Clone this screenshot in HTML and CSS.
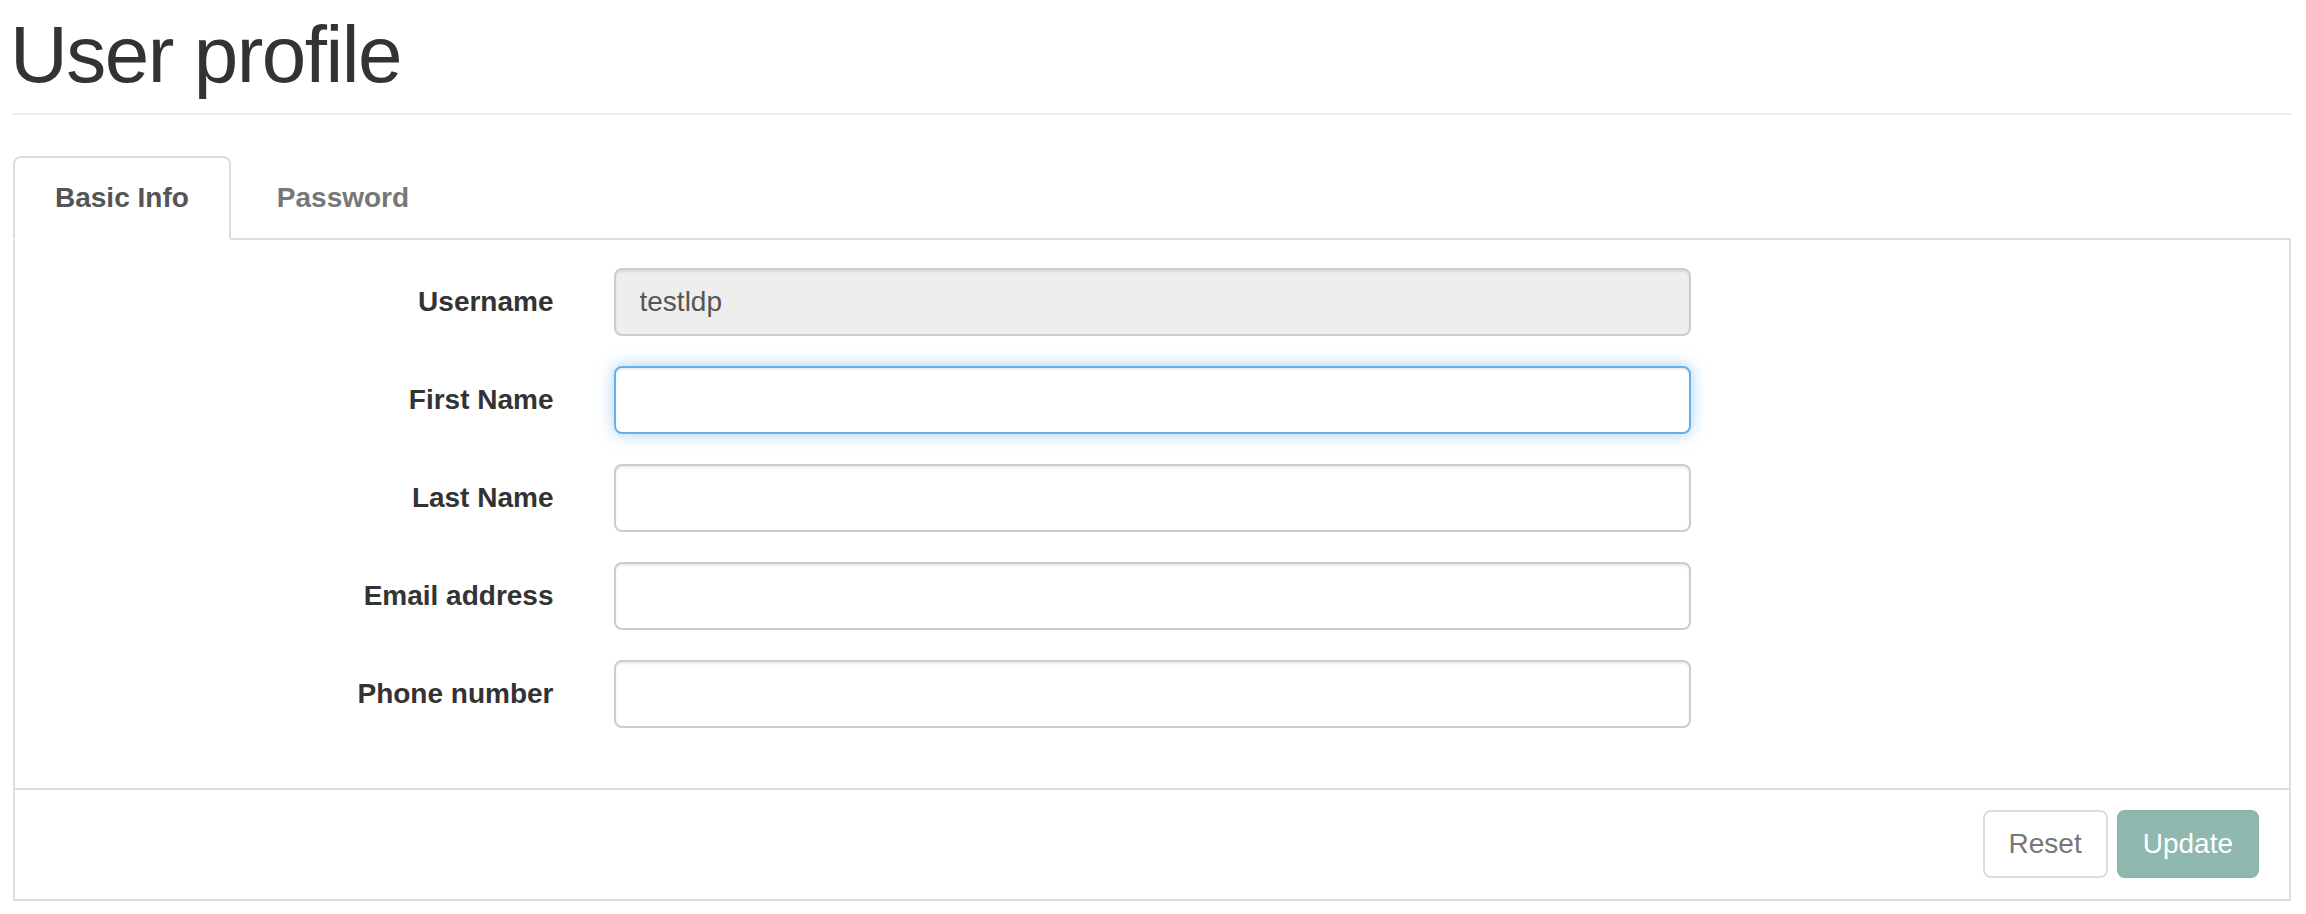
FILE: index.html
```html
<!DOCTYPE html>
<html lang="en">
<head>
    <meta charset="UTF-8">
    <meta name="viewport" content="width=device-width, initial-scale=1.0">
    <title>User profile</title>
    <link rel="stylesheet" href="styles.css">
</head>
<body>

    <div class="page">
        <h1 class="page-title">User profile</h1>

        <ul class="tabs">
            <li class="tab active">Basic Info</li>
            <li class="tab">Password</li>
        </ul>

        <form class="panel" id="perfil">
            <div class="panel-body">
                <div class="form-row">
                    <label class="form-label" for="username">Username</label>
                    <div class="form-field">
                        <input type="text" id="username" class="form-control" value="testldp" disabled>
                    </div>
                </div>

                <div class="form-row">
                    <label class="form-label" for="first-name">First Name</label>
                    <div class="form-field">
                        <input type="text" id="first-name" class="form-control is-focused">
                    </div>
                </div>

                <div class="form-row">
                    <label class="form-label" for="last-name">Last Name</label>
                    <div class="form-field">
                        <input type="text" id="last-name" class="form-control">
                    </div>
                </div>

                <div class="form-row">
                    <label class="form-label" for="email">Email address</label>
                    <div class="form-field">
                        <input type="email" id="email" class="form-control">
                    </div>
                </div>

                <div class="form-row">
                    <label class="form-label" for="phone">Phone number</label>
                    <div class="form-field">
                        <input type="text" id="phone" class="form-control">
                    </div>
                </div>
            </div>

            <div class="panel-footer">
                <button type="reset" class="btn btn-reset">Reset</button>
                <button type="submit" class="btn btn-update" disabled>Update</button>
            </div>
        </form>
    </div>

</body>
</html>
```

FILE: styles.css
```css
body {
    font-family: "Liberation Sans", Arial, Helvetica, sans-serif;
    font-size: 28px;
    line-height: 40px;
    margin: 0;
    padding: 0;
    background-color: #fff;
    color: #333;
}

.page {
    padding: 0 15px 0 13px;
}

.page-title {
    margin: 11px 0 0;
    padding-bottom: 14px;
    font-size: 80px;
    line-height: 88px;
    font-weight: normal;
    letter-spacing: -1.5px;
    text-indent: -3px;
    color: #333;
    border-bottom: 2px solid #eee;
}

.tabs {
    display: flex;
    margin: 41px 0 0;
    padding: 0;
    list-style: none;
    border-bottom: 2px solid #ddd;
}

.tab {
    padding: 20px 40px;
    margin-right: 4px;
    margin-bottom: -2px;
    border: 2px solid transparent;
    border-radius: 8px 8px 0 0;
    font-weight: bold;
    color: #777;
    cursor: pointer;
}

.tab.active {
    color: #555;
    background-color: #fff;
    border-color: #ddd #ddd transparent;
}

.panel {
    border: 2px solid #ddd;
    border-top: none;
}

.panel-body {
    padding: 28px 30px 30px;
}

.form-row {
    display: flex;
    margin: 0 -30px 30px;
}

.form-label {
    width: 25%;
    box-sizing: border-box;
    padding: 14px 30px 0;
    text-align: right;
    font-weight: bold;
    color: #333;
}

.form-field {
    width: 50%;
    box-sizing: border-box;
    padding: 0 30px;
}

.form-control {
    display: block;
    width: 100%;
    height: 68px;
    box-sizing: border-box;
    padding: 0 24px;
    font-family: inherit;
    font-size: 28px;
    color: #555;
    background-color: #fff;
    border: 2px solid #ccc;
    border-radius: 8px;
    box-shadow: inset 0 2px 2px rgba(0, 0, 0, 0.075);
}

.form-control:disabled {
    background-color: #eee;
    color: #555;
    opacity: 1;
}

.form-control.is-focused,
.form-control:focus {
    border-color: #66afe9;
    outline: none;
    box-shadow: inset 0 2px 2px rgba(0, 0, 0, 0.075), 0 0 16px rgba(102, 175, 233, 0.6);
}

.panel-footer {
    display: flex;
    justify-content: flex-end;
    gap: 9px;
    padding: 20px 30px 21px;
    border-top: 2px solid #ddd;
}

.btn {
    height: 68px;
    padding: 0 24px;
    font-family: inherit;
    font-size: 28px;
    border: 2px solid transparent;
    border-radius: 8px;
    cursor: pointer;
}

.btn-reset {
    color: #777;
    background-color: #fff;
    border-color: #ddd;
}

.btn-update {
    color: #fff;
    background-color: #8fb8af;
    border-color: #8ab3aa;
}

.btn-update:disabled {
    cursor: not-allowed;
}
```
